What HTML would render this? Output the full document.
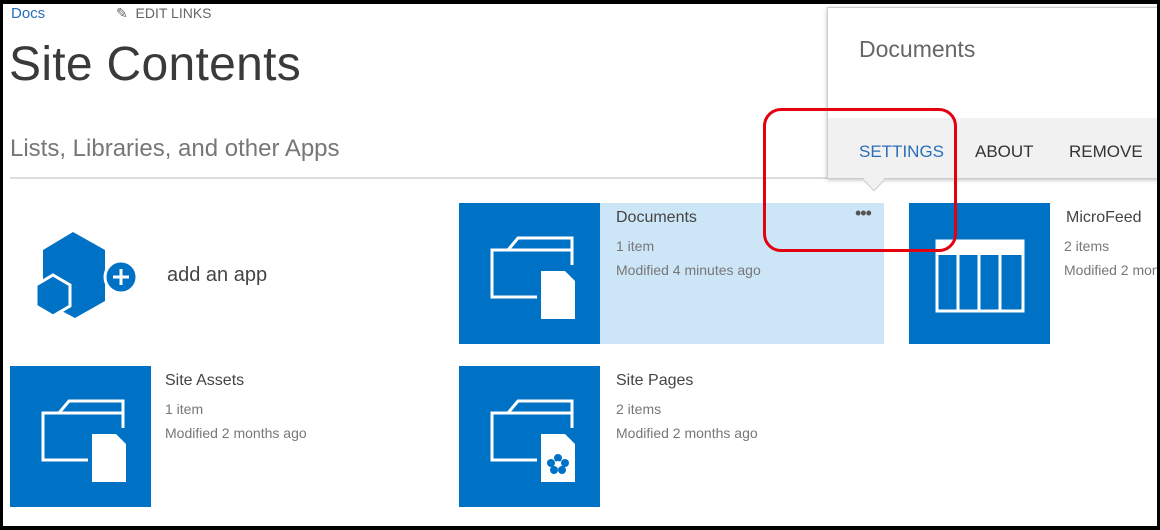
<!DOCTYPE html>
<html><head><style>
*{margin:0;padding:0;box-sizing:border-box}
body{width:1160px;height:530px;background:#000;position:relative;overflow:hidden;font-family:"Liberation Sans",sans-serif}
#pg{position:absolute;left:3px;top:4px;width:1154px;height:522px;background:#fff;overflow:hidden}
.a{position:absolute;white-space:nowrap}
.tile{position:absolute;background:#0072c6;width:141px;height:141px}
.t1{font-size:16px;color:#444}
.t2{font-size:14px;color:#777}
</style></head><body>
<div id="pg">
<div class="a" style="left:8px;top:1px;font-size:15px;color:#2a6ebb">Docs</div>
<div class="a" style="left:113px;top:1px;font-size:14px;color:#666">&#x270E;&nbsp; EDIT LINKS</div>
<div class="a" style="left:6px;top:33px;font-size:48px;color:#3a3a3a;letter-spacing:0.3px">Site Contents</div>
<div class="a" style="left:7px;top:131px;font-size:24px;color:#777">Lists, Libraries, and other Apps</div>
<div class="a" style="left:7px;top:173px;width:830px;height:2px;background:#ddd"></div>

<svg class="a" style="left:30px;top:222px" width="110" height="100" viewBox="0 0 110 100">
<polygon points="40,6 72,24 72,75 42,92 10,75 10,24" fill="#0072c6"/>
<polygon points="20,49 37,59 37,80 20,90 3,80 3,59" fill="#0072c6" stroke="#fff" stroke-width="3"/>
<circle cx="88" cy="51" r="16" fill="#0072c6" stroke="#fff" stroke-width="3"/>
<path d="M88 43v16M80 51h16" stroke="#fff" stroke-width="3"/>
</svg>
<div class="a" style="left:164px;top:260px;font-size:20px;color:#444">add an app</div>

<div class="a" style="left:456px;top:199px;width:425px;height:141px;background:#cde6f7"></div>
<div class="tile" style="left:456px;top:199px"></div>
<svg class="a" style="left:456px;top:199px" width="141" height="141"><g fill="none" stroke="#fff" stroke-width="3"><path d="M78 94H33V47h16l10-12h54v27"/><path d="M49 47h64"/></g><path d="M82 68h24l10 10v38H82z" fill="#fff"/></svg>
<div class="a t1" style="left:613px;top:205px">Documents</div>
<div class="a t2" style="left:613px;top:234px">1 item</div>
<div class="a t2" style="left:613px;top:258px">Modified 4 minutes ago</div>
<div class="a" style="left:852px;top:199px;font-size:18px;color:#555;letter-spacing:-1px">•••</div>

<div class="tile" style="left:906px;top:199px"></div>
<svg class="a" style="left:906px;top:199px" width="141" height="141"><rect x="28" y="38" width="86" height="70" fill="none" stroke="#fff" stroke-width="3"/><rect x="28" y="38" width="86" height="14" fill="#fff"/><path d="M49 52v56M70 52v56M91 52v56" stroke="#fff" stroke-width="3"/></svg>
<div class="a t1" style="left:1063px;top:205px">MicroFeed</div>
<div class="a t2" style="left:1061px;top:234px">2 items</div>
<div class="a t2" style="left:1061px;top:258px">Modified 2 months ago</div>

<div class="tile" style="left:7px;top:362px"></div>
<svg class="a" style="left:7px;top:362px" width="141" height="141"><g fill="none" stroke="#fff" stroke-width="3"><path d="M78 94H33V47h16l10-12h54v27"/><path d="M49 47h64"/></g><path d="M82 68h24l10 10v38H82z" fill="#fff"/></svg>
<div class="a t1" style="left:162px;top:368px">Site Assets</div>
<div class="a t2" style="left:162px;top:397px">1 item</div>
<div class="a t2" style="left:162px;top:421px">Modified 2 months ago</div>

<div class="tile" style="left:456px;top:362px"></div>
<svg class="a" style="left:456px;top:362px" width="141" height="141"><g fill="none" stroke="#fff" stroke-width="3"><path d="M78 94H33V47h16l10-12h54v27"/><path d="M49 47h64"/></g><path d="M82 68h24l10 10v38H82z" fill="#fff"/><g fill="#0072c6"><circle cx="99" cy="92" r="4"/><circle cx="92" cy="97" r="4"/><circle cx="106" cy="97" r="4"/><circle cx="95" cy="104" r="4"/><circle cx="103" cy="104" r="4"/></g><circle cx="99" cy="98" r="3" fill="#fff"/></svg>
<div class="a t1" style="left:613px;top:368px">Site Pages</div>
<div class="a t2" style="left:613px;top:397px">2 items</div>
<div class="a t2" style="left:613px;top:421px">Modified 2 months ago</div>

<div class="a" style="left:824px;top:3px;width:340px;height:172px;background:#fff;border:1px solid #ccc;box-shadow:0 1px 4px rgba(0,0,0,.25)"></div>
<div class="a" style="left:863px;top:168px;width:16px;height:16px;background:#f1f1f1;transform:rotate(45deg);border-right:1px solid #ccc;border-bottom:1px solid #ccc"></div>
<div class="a" style="left:825px;top:114px;width:340px;height:60px;background:#f1f1f1"></div>
<div class="a" style="left:856px;top:32px;font-size:23px;color:#666">Documents</div>
<div class="a" style="left:856px;top:138px;font-size:17px;color:#2a6ebb">SETTINGS</div>
<div class="a" style="left:972px;top:138px;font-size:17px;color:#333">ABOUT</div>
<div class="a" style="left:1066px;top:138px;font-size:17px;color:#333">REMOVE</div>

<div class="a" style="left:760px;top:104px;width:194px;height:144px;border:3px solid #e3000f;border-radius:18px"></div>
</div>
</body></html>
